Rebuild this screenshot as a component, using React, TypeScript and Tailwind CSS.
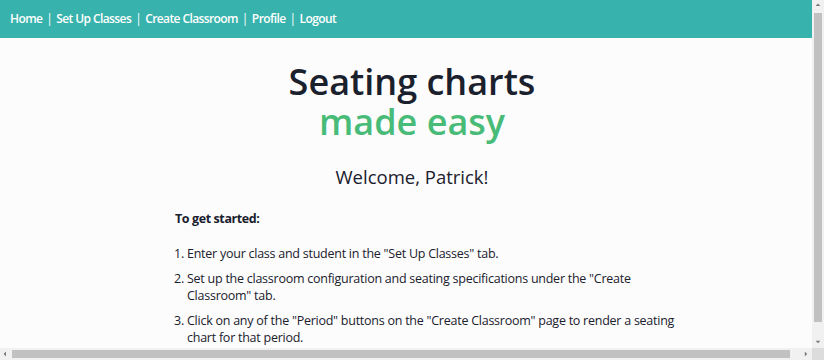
import React from 'react';

const NAV = ['Home', 'Set Up Classes', 'Create Classroom', 'Profile', 'Logout'];

const STEPS = [
  'Enter your class and student in the "Set Up Classes" tab.',
  'Set up the classroom configuration and seating specifications under the "Create Classroom" tab.',
  'Click on any of the "Period" buttons on the "Create Classroom" page to render a seating chart for that period.',
];

function Arrow({ dir }: { dir: 'up' | 'down' | 'left' | 'right' }) {
  const pts = {
    up: '2,6 6,2 10,6',
    down: '2,4 6,8 10,4',
    left: '6,2 2,6 6,10',
    right: '4,2 8,6 4,10',
  }[dir];
  return (
    <svg width="12" height="12" viewBox="0 0 12 12" className="shrink-0">
      <polygon points={pts} fill="#7a7a7a" transform="translate(6 6) scale(0.6) translate(-6 -6)" />
    </svg>
  );
}

export default function App() {
  return (
    <div className="flex h-[360px] w-[824px] flex-col overflow-hidden bg-[#fcfcfc] text-[#1a202c] [font-family:'Open_Sans',sans-serif]">
      <div className="flex min-h-0 flex-1">
        {/* page */}
        <div className="min-w-0 flex-1 overflow-hidden">
          <div className="w-[824px]">
            <nav className="flex h-[38px] items-center gap-[4px] bg-[#38b2ac] px-[10px] pb-[1px] text-[12px] font-semibold tracking-[-0.6px] text-white">
              {NAV.map((item, i) => (
                <React.Fragment key={item}>
                  {i > 0 && <span className="font-normal">|</span>}
                  <a href="#">{item}</a>
                </React.Fragment>
              ))}
            </nav>

            <div className="flex flex-col items-center pt-[24px]">
              <h1 className="text-[36px] font-semibold leading-[40px]">Seating charts</h1>
              <h2 className="text-[36px] font-semibold leading-[40px] text-[#48bb78]">made easy</h2>
              <p className="mt-[22px] text-[18.5px] leading-[26px]">Welcome, Patrick!</p>
            </div>

            <div className="ml-[175px] mt-[20px] w-[510px] text-[12.5px] tracking-[-0.25px]">
              <p className="font-bold leading-[18px] tracking-[-0.4px]">To get started:</p>
              <ol className="mt-[17px] list-decimal pl-[12px]">
                {STEPS.map((s) => (
                  <li key={s} className="mb-[8px] leading-[17px]">{s}</li>
                ))}
              </ol>
            </div>
          </div>
        </div>

        {/* vertical scrollbar */}
        <div className="flex w-[12px] flex-col bg-[#f1f1f1]">
          <Arrow dir="up" />
          <div className="flex-1 px-[2px] pb-[14px] pt-[1px]">
            <div className="h-full bg-[#c1c1c1]" />
          </div>
          <Arrow dir="down" />
        </div>
      </div>

      {/* horizontal scrollbar */}
      <div className="flex h-[12px] bg-[#f1f1f1]">
        <Arrow dir="left" />
        <div className="flex-1 py-[2px] pr-[10px]">
          <div className="h-full bg-[#c1c1c1]" />
        </div>
        <Arrow dir="right" />
        <div className="w-[12px] bg-[#dcdcdc]" />
      </div>
    </div>
  );
}
